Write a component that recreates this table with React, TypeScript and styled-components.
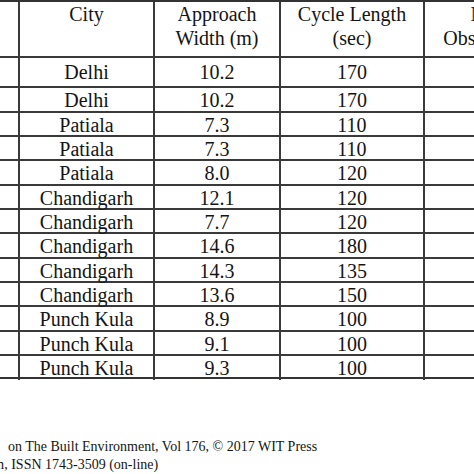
import styled, { createGlobalStyle } from "styled-components";

const GlobalStyle = createGlobalStyle`
  html, body {
    margin: 0;
    padding: 0;
    background: #ffffff;
  }
  body {
    font-family: "Liberation Serif", "Times New Roman", serif;
    color: #141414;
    overflow: hidden;
  }
  * {
    box-sizing: border-box;
  }
`;

interface SignalRow {
  city: string;
  width: string;
  cycle: string;
  height: number;
}

// heights follow the ruled lines of the scanned table
const rows: SignalRow[] = [
  { city: "Delhi", width: "10.2", cycle: "170", height: 30 },
  { city: "Delhi", width: "10.2", cycle: "170", height: 25 },
  { city: "Patiala", width: "7.3", cycle: "110", height: 24 },
  { city: "Patiala", width: "7.3", cycle: "110", height: 24 },
  { city: "Patiala", width: "8.0", cycle: "120", height: 25 },
  { city: "Chandigarh", width: "12.1", cycle: "120", height: 24 },
  { city: "Chandigarh", width: "7.7", cycle: "120", height: 24 },
  { city: "Chandigarh", width: "14.6", cycle: "180", height: 25 },
  { city: "Chandigarh", width: "14.3", cycle: "135", height: 24 },
  { city: "Chandigarh", width: "13.6", cycle: "150", height: 24 },
  { city: "Punch Kula", width: "8.9", cycle: "100", height: 25 },
  { city: "Punch Kula", width: "9.1", cycle: "100", height: 24 },
  { city: "Punch Kula", width: "9.3", cycle: "100", height: 23 },
];

function App() {
  return (
    <>
      <GlobalStyle />
      <Page>
        <Table>
          <HeadRow>
            <Cell />
            <Cell>City</Cell>
            <Cell>
              Approach
              <br />
              Width (m)
            </Cell>
            <Cell>
              Cycle Length
              <br />
              (sec)
            </Cell>
            <Cell>
              No. of
              <br />
              Observations
            </Cell>
          </HeadRow>
          {rows.map((row, i) => (
            <BodyRow key={i} $height={row.height}>
              <Cell $middle />
              <Cell $middle>{row.city}</Cell>
              <Cell $middle>{row.width}</Cell>
              <Cell $middle>{row.cycle}</Cell>
              <Cell $middle />
            </BodyRow>
          ))}
        </Table>
        <Source>
          <SourceLine $shift={8}>
            on The Built Environment, Vol 176, © 2017 WIT Press
          </SourceLine>
          <SourceLine $shift={-103}>
            www.witpress.com, ISSN 1743-3509 (on-line)
          </SourceLine>
        </Source>
      </Page>
    </>
  );
}

export default App;

const Page = styled.div`
  width: 474px;
  height: 474px;
  overflow: hidden;
  background: #ffffff;
`;

const Table = styled.div`
  width: 609px;
  margin-left: -40px;
  border-top: 2px solid #333333;
`;

const HeadRow = styled.div`
  display: grid;
  grid-template-columns: 60px 135px 126px 144px 144px;
  height: 56px;
  border-bottom: 2px solid #3a3a3a;
`;

const BodyRow = styled(HeadRow)<{ $height: number }>`
  height: ${(p) => p.$height}px;
  &:last-child {
    border-bottom-color: #333333;
  }
`;

const Cell = styled.div<{ $middle?: boolean }>`
  display: flex;
  align-items: ${(p) => (p.$middle ? "center" : "flex-start")};
  justify-content: center;
  text-align: center;
  border-right: 2px solid #3a3a3a;
  font-size: 20px;
  line-height: 24px;
  white-space: nowrap;
`;

const Source = styled.div`
  margin-top: 59px;
  font-size: 14px;
  line-height: 18px;
  white-space: nowrap;
`;

const SourceLine = styled.div<{ $shift?: number }>`
  margin-left: ${(p) => p.$shift ?? 0}px;
`;
